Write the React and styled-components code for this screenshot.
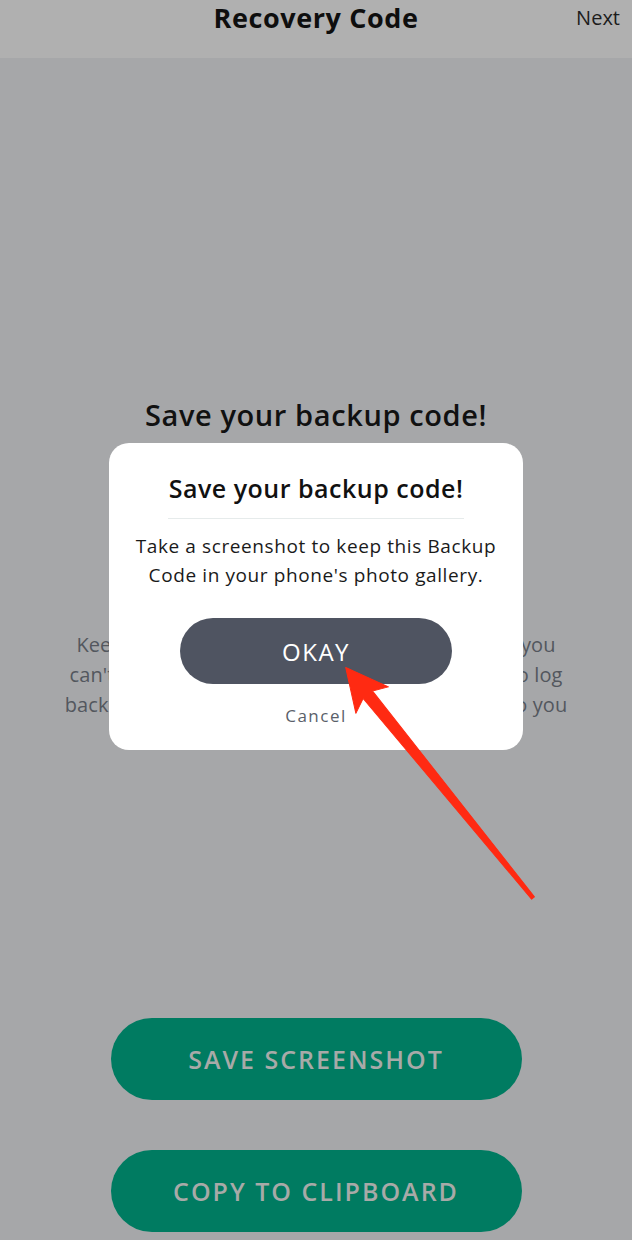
import React from 'react';
import styled, { createGlobalStyle } from 'styled-components';

const GlobalStyle = createGlobalStyle`
  html, body {
    margin: 0;
    padding: 0;
    background: #a6a7a9;
  }
  body {
    font-family: "Open Sans", Lato, "Liberation Sans", sans-serif;
    -webkit-font-smoothing: antialiased;
  }
`;

const Screen = styled.div`
  position: relative;
  width: 632px;
  height: 1240px;
  overflow: hidden;
  display: flex;
  flex-direction: column;
  background: #a6a7a9;
`;

const Header = styled.header`
  position: relative;
  height: 58px;
  flex-shrink: 0;
  background: #b0b0b0;
  display: flex;
  justify-content: center;
  align-items: flex-start;
  padding-top: 2px;
  box-sizing: border-box;
`;

const HeaderTitle = styled.h1`
  margin: 0;
  font-size: 27px;
  line-height: 32px;
  font-weight: 700;
  letter-spacing: 0.6px;
  color: #0e0e0e;
`;

const NextLink = styled.span`
  position: absolute;
  right: 12px;
  top: 3px;
  font-size: 20px;
  line-height: 30px;
  color: #1c1c1c;
`;

const Body = styled.main`
  flex: 1;
  display: flex;
  flex-direction: column;
  align-items: center;
  padding: 340px 0 8px;
`;

const Heading = styled.h2`
  margin: 0;
  font-size: 29px;
  line-height: 34px;
  font-weight: 600;
  letter-spacing: 0.6px;
  color: #111;
`;

const Paragraph = styled.p`
  margin: 198px 0 0;
  font-size: 20px;
  line-height: 30px;
  letter-spacing: 0.1px;
  text-align: center;
  white-space: nowrap;
  color: #53575e;
`;

const Actions = styled.div`
  margin-top: auto;
  display: flex;
  flex-direction: column;
  gap: 50px;
`;

const GreenButton = styled.button`
  width: 411px;
  height: 82px;
  border: none;
  border-radius: 41px;
  background: #007b61;
  color: #a8aaa8;
  font-family: inherit;
  font-size: 25px;
  font-weight: 600;
  letter-spacing: 2px;
  text-transform: uppercase;
  cursor: pointer;
`;

const Dialog = styled.div`
  position: absolute;
  left: 109px;
  top: 443px;
  width: 414px;
  box-sizing: border-box;
  padding: 30px 0 23px;
  background: #fff;
  border-radius: 20px;
  display: flex;
  flex-direction: column;
  align-items: center;
`;

const DialogTitle = styled.h3`
  margin: 0;
  font-size: 25px;
  line-height: 30px;
  font-weight: 600;
  letter-spacing: 0.5px;
  color: #111;
`;

const Divider = styled.hr`
  width: 296px;
  margin: 15px 0 0;
  border: none;
  border-top: 1px solid #e6ebeb;
`;

const DialogText = styled.p`
  margin: 13px 0 0;
  font-size: 19px;
  line-height: 29px;
  letter-spacing: 0.6px;
  text-align: center;
  color: #1a1a1a;
`;

const OkayButton = styled.button`
  margin-top: 28px;
  width: 272px;
  height: 66px;
  border: none;
  border-radius: 33px;
  background: #4f5461;
  color: #fff;
  font-family: inherit;
  font-size: 24px;
  letter-spacing: 1.5px;
  cursor: pointer;
`;

const CancelLink = styled.span`
  margin-top: 21px;
  font-size: 17px;
  line-height: 22px;
  letter-spacing: 1.5px;
  color: #5a5f6a;
`;

const ArrowLayer = styled.svg`
  position: absolute;
  left: 0;
  top: 0;
  pointer-events: none;
`;

function PointerArrow() {
  return (
    <ArrowLayer width="632" height="1240" viewBox="0 0 632 1240">
      <g transform="translate(533 898) rotate(-129.1)">
        <polygon
          points="0,-1.8 262,-6 255,-21 297,0 255,21 262,6 0,1.8"
          fill="#ff2a12"
          stroke="#ff2a12"
          strokeWidth="1"
          strokeLinejoin="round"
        />
      </g>
    </ArrowLayer>
  );
}

export default function App() {
  return (
    <>
      <GlobalStyle />
      <Screen>
        <Header>
          <HeaderTitle>Recovery Code</HeaderTitle>
          <NextLink>Next</NextLink>
        </Header>
        <Body>
          <Heading>Save your backup code!</Heading>
          <Paragraph>
            Keep this Backup Code somewhere safe, and if you
            <br />
            can't access your phone, you can use the code to log
            <br />
            back in. Nobody will ever ask you for the code, so you
            <br />
            should never share it.
          </Paragraph>
          <Actions>
            <GreenButton>Save Screenshot</GreenButton>
            <GreenButton>Copy to Clipboard</GreenButton>
          </Actions>
        </Body>
        <Dialog>
          <DialogTitle>Save your backup code!</DialogTitle>
          <Divider />
          <DialogText>
            Take a screenshot to keep this Backup
            <br />
            Code in your phone's photo gallery.
          </DialogText>
          <OkayButton>OKAY</OkayButton>
          <CancelLink>Cancel</CancelLink>
        </Dialog>
        <PointerArrow />
      </Screen>
    </>
  );
}
